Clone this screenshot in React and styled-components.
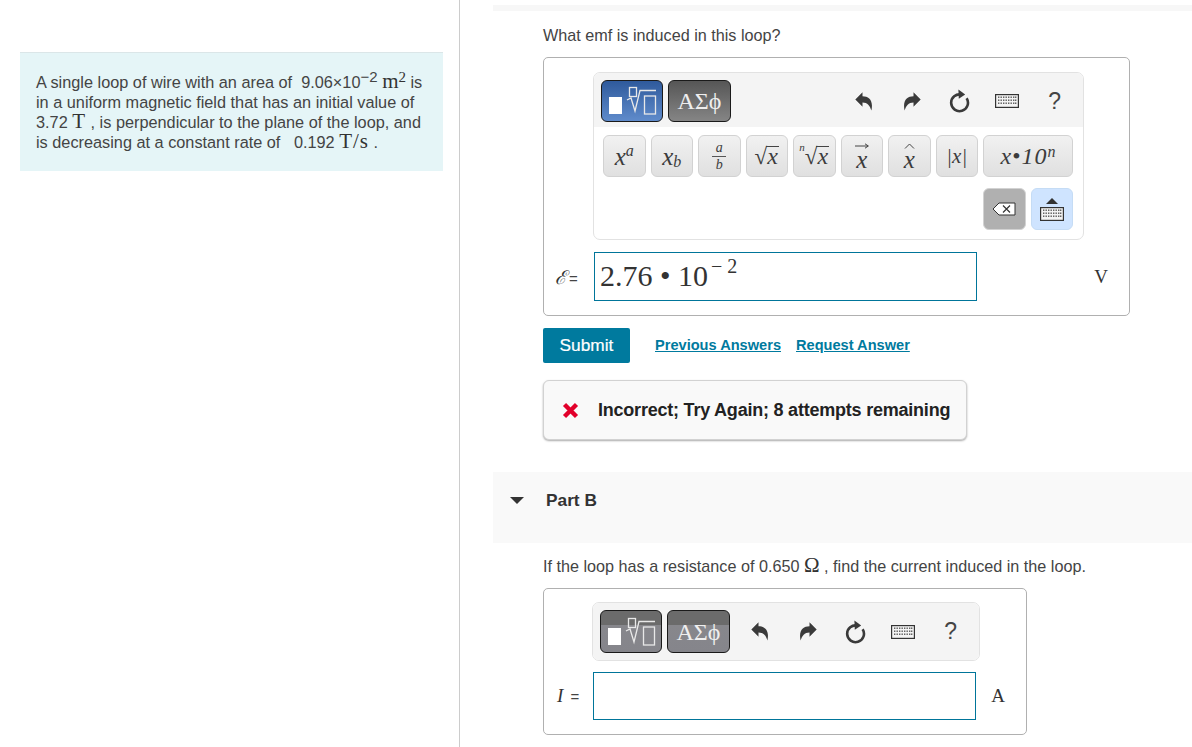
import React from "react";
import styled, { createGlobalStyle } from "styled-components";

const Global = createGlobalStyle`
  html, body { margin: 0; padding: 0; background: #fff; }
  body { font-family: "Liberation Sans", Arial, sans-serif; color: #333; overflow: hidden; }
`;
const serif = `"Liberation Serif", "DejaVu Serif", serif`;

const Page = styled.div`display: flex; width: 1192px; height: 747px; overflow: hidden;`;
const Sidebar = styled.aside`
  width: 459px; flex: none; border-right: 1px solid #ccc;
  padding-top: 52px;
`;
const Intro = styled.div`
  margin-left: 20px; width: 423px; height: 119px; box-sizing: border-box;
  background: #e5f5f7; border-top: 1px solid #dbe6e8;
  padding: 19px 16px 0; font-size: 16.3px; line-height: 20px; color: #444;
  white-space: nowrap;
`;
const MathRoman = styled.span`
  font-family: ${serif}; font-size: 21px; line-height: 0; color: #333;
  letter-spacing: ${p => p.$sp || 0}px;
`;
const Sup = styled.sup`font-size: 15px; line-height: 0; vertical-align: 6px;`;

const Main = styled.main`flex: 1; padding: 5px 0 0 33px; min-width: 0;`;
const TopBand = styled.div`height: 6px; background: #f7f7f7;`;
const Section = styled.section`padding-left: 50px;`;
const Prompt = styled.p`
  margin: ${p => p.$mt}px 0 0; font-size: 16.2px; line-height: 20px; color: #444; white-space: nowrap;
`;

const AnswerBox = styled.div`
  box-sizing: border-box; border: 1px solid #b0b0b0; border-radius: 5px; background: #fff;
  width: ${p => p.$w}px; height: ${p => p.$h}px; margin-top: ${p => p.$mt}px;
  padding: ${p => p.$pt}px 0 0 10px;
`;
const Toolbar = styled.div`
  box-sizing: border-box; width: ${p => p.$w}px; margin-left: ${p => p.$ml}px;
  border: 1px solid #e2e2e2; border-radius: 7px; overflow: hidden; background: #fff;
`;
const ToolRow = styled.div`
  display: flex; align-items: center; box-sizing: border-box; height: ${p => p.$h}px;
  background: #f4f4f4; padding: ${p => p.$pt}px 0 0 7px;
`;
const ModeButton = styled.div`
  box-sizing: border-box; width: ${p => p.$w}px; height: ${p => p.$h}px; margin-right: 5px; flex: none;
  border: 1px solid #1a1a1a; border-radius: 6px; color: #eee;
  display: flex; align-items: center; justify-content: center; overflow: hidden;
  font-family: ${serif}; font-size: 24px; line-height: 1;
  background: ${p => p.$kind === "blue" ? "linear-gradient(#2f5a9c,#5f8bcb)"
    : p.$kind === "flat" ? "linear-gradient(#6b6b6b 0,#6b6b6b 34%,#87878c 35%,#85858b 100%)"
    : "linear-gradient(#565656,#858585)"};
`;
const Icons = styled.div`display: flex; margin-left: auto; padding-right: 5px;`;
const IconCell = styled.div`
  width: 47.5px; height: 24px; box-sizing: border-box; display: flex; align-items: center; justify-content: center;
`;
const Question = styled(IconCell)`font-size: 23px; color: #444; padding-left: 1px;`;
const KeyPad = styled.div`padding: 8px 0 0 9px; height: 112px; box-sizing: border-box;`;
const KeyRow = styled.div`
  display: flex; gap: 5px; margin-bottom: 11px; justify-content: ${p => p.$end ? "flex-end" : "flex-start"};
  padding-right: ${p => p.$end ? "10px" : 0};
`;
const Key = styled.div`
  box-sizing: border-box; height: 42px; width: ${p => p.$w || 42.5}px; flex: none;
  border: 1px solid ${p => p.$tone === "light" ? "#c5dcf5" : "#d2d2d2"}; border-radius: 6px;
  display: flex; align-items: center; justify-content: center;
  background: ${p => p.$tone === "dark" ? "#b0b0b0" : p.$tone === "light" ? "#cfe4ff" : "linear-gradient(#f1f1f1,#e0e0e0)"};
  font-family: ${serif}; font-style: italic; font-size: 25px; color: #3c3c3c; line-height: 1;
`;
const Small = styled.span`font-size: 16px; position: relative; top: ${p => p.$top}px;`;
const Fraction = styled.span`display: flex; flex-direction: column; align-items: center; font-size: 14px; width: 14px;`;
const FracTop = styled.span`border-bottom: 1px solid #555; width: 100%; text-align: center; padding-bottom: 1px;`;
const FracBottom = styled.span`padding-top: 1px;`;
const Over = styled.span`border-top: 1px solid #444; line-height: 19px; font-size: 24px; padding: 0 1px;`;
const Root = styled.span`font-style: normal; font-size: 23px; margin-right: -1px;`;
const TinyIndex = styled.span`font-size: 11px; position: relative; top: -9px;`;
const Stack = styled.span`display: flex; flex-direction: column; align-items: center; gap: 2px;`;
const StackBase = styled.span`line-height: 18px; height: 18px;`;
const Abs = styled.span`font-size: 21px;`;
const Sci = styled.span`font-size: 24px; letter-spacing: 1px;`;

const AnswerRow = styled.div`display: flex; align-items: center; margin-top: ${p => p.$mt}px;`;
const VarLabel = styled.div`
  width: ${p => p.$w}px; flex: none; padding-left: ${p => p.$pl}px; box-sizing: border-box;
  font-size: 15px; color: #444; white-space: nowrap;
`;
const VarName = styled.i`font-family: ${serif}; font-size: 19px; color: #333; margin-right: 3px;`;
const AnswerInput = styled.div`
  box-sizing: border-box; width: 383px; flex: none; height: ${p => p.$h}px; border: 1px solid #00759a;
  padding: 0 0 2px 5px;
  font-family: ${serif}; font-size: 30px; color: #333; display: flex; align-items: center; white-space: pre;
`;
const Exponent = styled.span`font-size: 20px; position: relative; top: -9px; margin-left: 3px;`;
const Unit = styled.div`
  font-family: ${serif}; font-size: 19px; color: #333; text-align: center; width: 20px; margin-left: ${p => p.$ml}px;
`;

const Actions = styled.div`display: flex; align-items: center; margin-top: 12px; height: 35px;`;
const Submit = styled.div`
  width: 87px; height: 35px; background: #007a9e; border-radius: 2px; color: #fff; font-size: 17.3px;
  display: flex; align-items: center; justify-content: center; margin-right: 25px;
  -webkit-text-stroke: 0.2px #fff;
`;
const LinkText = styled.a`
  color: #007a9e; font-size: 14.6px; line-height: 16px; font-weight: bold; text-decoration: underline; margin: -2px 15px 0 0;
`;
const Feedback = styled.div`
  box-sizing: border-box; width: 424px; height: 60px; margin-top: 17px; display: flex; align-items: center;
  background: #f9f9f9; border: 1px solid #d2d2d2; border-radius: 6px; box-shadow: 0 1px 2px #aaa;
  padding-left: 18px; gap: 19px; font-size: 18px; font-weight: bold; color: #222; white-space: nowrap;
  letter-spacing: -0.22px;
`;
const PartHeader = styled.div`
  margin-top: 32px; height: 71px; background: #f9f9f9; display: flex; align-items: flex-start; padding: 18px 0 0 17px;
  box-sizing: border-box;
`;
const Caret = styled.span`
  width: 0; height: 0; border-left: 7px solid transparent; border-right: 7px solid transparent;
  border-top: 7px solid #333; margin: 7px 22px 0 0;
`;
const PartTitle = styled.div`font-size: 17.3px; font-weight: bold; color: #333; line-height: 20px;`;

const Undo = ({ flip }) => (
  <svg width="18" height="19" viewBox="0 0 18 19" style={flip ? { transform: "scaleX(-1)" } : undefined}>
    <path d="M0.3 7.5 L7.5 0.3 V4.2 C14 4.2 18.6 8.4 16.4 18.6 C15 13.6 12.5 10.4 7.5 10.4 V14.8 Z" fill="#3a3a3a" />
  </svg>
);
const Refresh = () => (
  <svg width="22" height="24" viewBox="0 0 22 24">
    <path d="M13.5 5.6 A8.4 8.4 0 1 0 18.6 9.2" fill="none" stroke="#3a3a3a" strokeWidth="2.6" />
    <path d="M10.4 0.5 L17.2 5.6 L10.8 9.8 Z" fill="#3a3a3a" />
  </svg>
);
const Keyboard = ({ w = 24, h = 14 }) => (
  <svg width={w} height={h} viewBox="0 0 24 14">
    <rect x="0.6" y="0.6" width="22.8" height="12.8" fill="#f4f4f4" stroke="#333" strokeWidth="1.2" />
    {[3, 6, 9].map(y =>
      [3, 5.5, 8, 10.5, 13, 15.5, 18, 20].map(x => (
        <rect key={`${x}-${y}`} x={x} y={y - 0.5} width="1.4" height="1.4" fill="#555" />
      ))
    )}
  </svg>
);
const TemplateIcon = () => (
  <svg width="52" height="36" viewBox="0 0 52 36">
    <rect x="3" y="14" width="13" height="17" fill="#fff" />
    <rect x="23.5" y="4.5" width="7" height="9" fill="none" stroke="#e8e8e8" strokeWidth="1.3" />
    <path d="M21 17 L25 15 L29 28 L34 7.5 H50" fill="none" stroke="#e8e8e8" strokeWidth="1.3" />
    <rect x="38.5" y="13" width="11" height="18" fill="none" stroke="#e8e8e8" strokeWidth="1.3" />
  </svg>
);
const Backspace = () => (
  <svg width="24" height="14" viewBox="0 0 24 14">
    <path d="M7 1 H23 V13 H7 L1 7 Z" fill="#fff" stroke="#333" strokeWidth="1" />
    <path d="M11 3.5 L18 10.5 M18 3.5 L11 10.5" stroke="#333" strokeWidth="1.2" />
  </svg>
);
const Cross = () => (
  <svg width="17" height="17" viewBox="0 0 17 17">
    <path d="M2.5 2.5 L14.5 14.5 M14.5 2.5 L2.5 14.5" stroke="#e2002b" strokeWidth="4.4" />
  </svg>
);
const VectorMark = () => (
  <svg width="14" height="6" viewBox="0 0 14 6">
    <path d="M0 3 H13 M10 0.8 L13.4 3 L10 5.2" fill="none" stroke="#444" strokeWidth="1" />
  </svg>
);
const HatMark = () => (
  <svg width="11" height="6" viewBox="0 0 11 6">
    <path d="M1 5.5 L5.5 1 L10 5.5" fill="none" stroke="#444" strokeWidth="1" />
  </svg>
);
const UpKeyboard = styled.span`display: flex; flex-direction: column; align-items: center; gap: 3px;`;
const UpArrow = styled.span`
  width: 0; height: 0; border-left: 6px solid transparent; border-right: 6px solid transparent; border-bottom: 6px solid #333;
`;

const ToolIcons = () => (
  <Icons>
    <IconCell><Undo /></IconCell>
    <IconCell><Undo flip /></IconCell>
    <IconCell><Refresh /></IconCell>
    <IconCell><Keyboard /></IconCell>
    <Question>?</Question>
  </Icons>
);

export default function App() {
  return (
    <Page>
      <Global />
      <Sidebar>
        <Intro>
          A single loop of wire with an area of&nbsp; 9.06×10<Sup>−2</Sup> <MathRoman>m<Sup>2</Sup></MathRoman> is<br />
          in a uniform magnetic field that has an initial value of<br />
          3.72 <MathRoman $sp={1}>T</MathRoman> , is perpendicular to the plane of the loop, and<br />
          is decreasing at a constant rate of &nbsp; 0.192 <MathRoman $sp={1}>T/s</MathRoman> .
        </Intro>
      </Sidebar>
      <Main>
        <TopBand />
        <Section>
          <Prompt $mt={14}>What emf is induced in this loop?</Prompt>
          <AnswerBox $w={587} $h={259} $mt={12} $pt={14}>
            <Toolbar $w={491} $ml={39}>
              <ToolRow $h={54} $pt={2}>
                <ModeButton $w={62} $h={42} $kind="blue"><TemplateIcon /></ModeButton>
                <ModeButton $w={63} $h={42}>ΑΣϕ</ModeButton>
                <ToolIcons />
              </ToolRow>
              <KeyPad>
                <KeyRow>
                  <Key>x<Small $top={-5}>a</Small></Key>
                  <Key>x<Small $top={6}>b</Small></Key>
                  <Key><Fraction><FracTop>a</FracTop><FracBottom>b</FracBottom></Fraction></Key>
                  <Key><Root>√</Root><Over>x</Over></Key>
                  <Key><TinyIndex>n</TinyIndex><Root>√</Root><Over>x</Over></Key>
                  <Key><Stack><VectorMark /><StackBase>x</StackBase></Stack></Key>
                  <Key><Stack><HatMark /><StackBase>x</StackBase></Stack></Key>
                  <Key><Abs>|x|</Abs></Key>
                  <Key $w={90}><Sci>x•10</Sci><Small $top={-4}>n</Small></Key>
                </KeyRow>
                <KeyRow $end>
                  <Key $w={43} $tone="dark"><Backspace /></Key>
                  <Key $tone="light"><UpKeyboard><UpArrow /><Keyboard /></UpKeyboard></Key>
                </KeyRow>
              </KeyPad>
            </Toolbar>
            <AnswerRow $mt={12}>
              <VarLabel $w={40} $pl={1}><VarName>ℰ</VarName>=</VarLabel>
              <AnswerInput $h={49}>2.76 • 10<Exponent>− 2</Exponent></AnswerInput>
              <Unit $ml={114}>V</Unit>
            </AnswerRow>
          </AnswerBox>
          <Actions>
            <Submit>Submit</Submit>
            <LinkText>Previous Answers</LinkText>
            <LinkText>Request Answer</LinkText>
          </Actions>
          <Feedback><Cross />Incorrect; Try Again; 8 attempts remaining</Feedback>
        </Section>
        <PartHeader>
          <Caret />
          <PartTitle>Part B</PartTitle>
        </PartHeader>
        <Section>
          <Prompt $mt={13}>If the loop has a resistance of 0.650 <MathRoman>Ω</MathRoman> , find the current induced in the loop.</Prompt>
          <AnswerBox $w={484} $h={147} $mt={12} $pt={13}>
            <Toolbar $w={388} $ml={38}>
              <ToolRow $h={57} $pt={0}>
                <ModeButton $w={62} $h={43} $kind="flat"><TemplateIcon /></ModeButton>
                <ModeButton $w={63} $h={43} $kind="flat">ΑΣϕ</ModeButton>
                <ToolIcons />
              </ToolRow>
            </Toolbar>
            <AnswerRow $mt={11}>
              <VarLabel $w={39} $pl={3}><VarName>I</VarName> =</VarLabel>
              <AnswerInput $h={48} />
              <Unit $ml={12}>A</Unit>
            </AnswerRow>
          </AnswerBox>
        </Section>
      </Main>
    </Page>
  );
}
